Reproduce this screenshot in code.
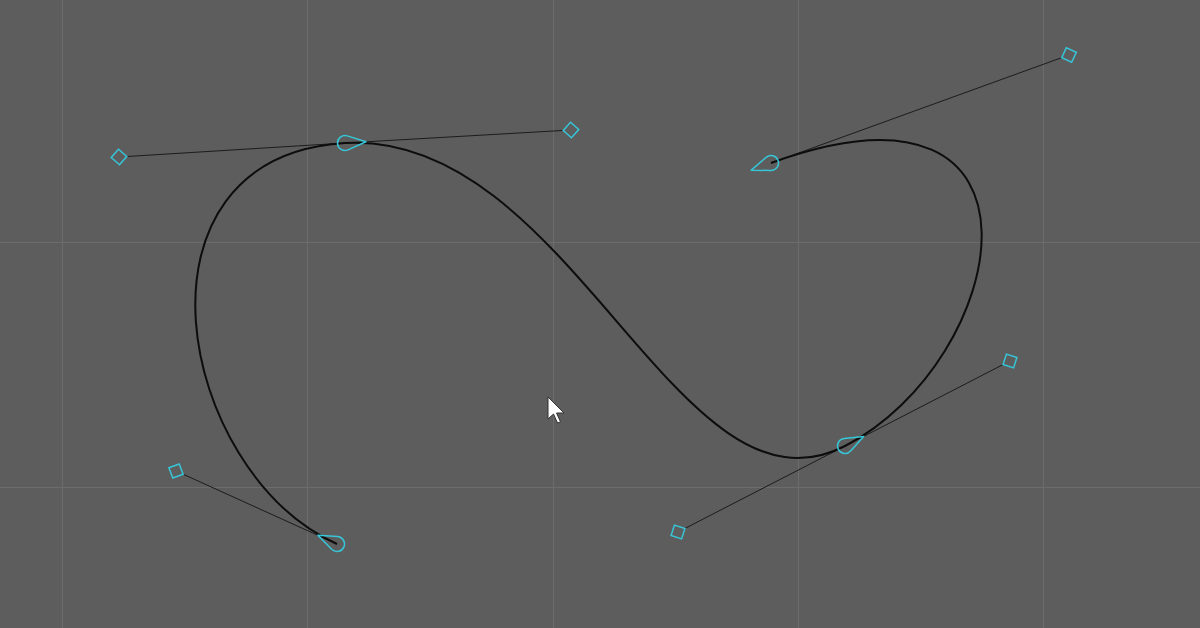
import React from "react";

type P = [number, number];

const anchors: { c: P; dir: P }[] = [
  { c: [337, 544], dir: [-161, -73] },
  { c: [345, 143], dir: [226, -13] },
  { c: [845, 446], dir: [165, -85] },
  { c: [771, 163], dir: [-298, 108] },
];

const handles: { a: P; h: P }[] = [
  { a: [337, 544], h: [176, 471] },
  { a: [345, 143], h: [119, 157] },
  { a: [345, 143], h: [571, 130] },
  { a: [845, 446], h: [678, 532] },
  { a: [845, 446], h: [1010, 361] },
  { a: [771, 163], h: [1069, 55] },
];

const CYAN = "#36c6d8";

function teardrop(c: P, dir: P) {
  const len = Math.hypot(dir[0], dir[1]);
  const d: P = [dir[0] / len, dir[1] / len];
  const n: P = [-d[1], d[0]];
  const L = 21;
  const r = 7.5;
  const tip: P = [c[0] + d[0] * L, c[1] + d[1] * L];
  const cosT = r / L;
  const sinT = Math.sqrt(1 - cosT * cosT);
  const t1: P = [c[0] + r * (cosT * d[0] + sinT * n[0]), c[1] + r * (cosT * d[1] + sinT * n[1])];
  const t2: P = [c[0] + r * (cosT * d[0] - sinT * n[0]), c[1] + r * (cosT * d[1] - sinT * n[1])];
  return `M${tip[0]},${tip[1]} L${t1[0]},${t1[1]} A${r},${r} 0 1 1 ${t2[0]},${t2[1]} Z`;
}

export default function App() {
  const vx = [62, 307, 553, 798, 1043];
  const hy = [242, 487];
  return (
    <div className="w-[1200px] h-[628px] bg-[#5d5d5d] overflow-hidden">
      <svg width="1200" height="628" viewBox="0 0 1200 628" className="block">
        {vx.map((x) => (
          <line key={"v" + x} x1={x + 0.5} y1={0} x2={x + 0.5} y2={628} stroke="#6c6c6c" strokeWidth={1} />
        ))}
        {hy.map((y) => (
          <line key={"h" + y} x1={0} y1={y + 0.5} x2={1200} y2={y + 0.5} stroke="#6c6c6c" strokeWidth={1} />
        ))}
        {handles.map(({ a, h }, i) => {
          const dx = h[0] - a[0];
          const dy = h[1] - a[1];
          const len = Math.hypot(dx, dy);
          const ex = h[0] - (dx / len) * 7.5;
          const ey = h[1] - (dy / len) * 7.5;
          const ang = (Math.atan2(dy, dx) * 180) / Math.PI + 45;
          return (
            <g key={i}>
              <line x1={a[0]} y1={a[1]} x2={ex} y2={ey} stroke="#1c1c1c" strokeWidth={1} />
              <rect
                x={-5.5}
                y={-5.5}
                width={11}
                height={11}
                fill="none"
                stroke={CYAN}
                strokeWidth={1.5}
                transform={`translate(${h[0]},${h[1]}) rotate(${ang})`}
              />
            </g>
          );
        })}
        <path
          d="M337,544 C176,471 119,157 345,143 C571,130 678,532 845,446 C1010,361 1069,55 771,163"
          fill="none"
          stroke="#0d0d0d"
          strokeWidth={2}
        />
        {anchors.map(({ c, dir }, i) => (
          <path key={i} d={teardrop(c, dir)} fill="none" stroke={CYAN} strokeWidth={1.5} strokeLinejoin="round" />
        ))}
        <path
          d="M548,397 L548,419 L553.5,414 L557.5,423 L560.5,421.8 L556.5,413 L564,413 Z"
          fill="#ffffff"
          stroke="#333333"
          strokeWidth={1}
          strokeLinejoin="round"
        />
      </svg>
    </div>
  );
}
